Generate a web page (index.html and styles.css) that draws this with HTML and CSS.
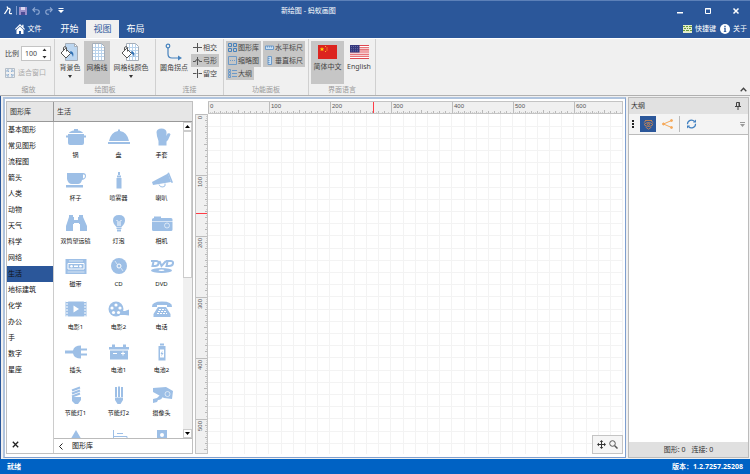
FILE: index.html
```html
<!DOCTYPE html>
<html lang="zh-CN">
<head>
  <meta charset="UTF-8" />
  <meta name="viewport" content="width=device-width, initial-scale=1.0"/>
  <title>新绘图 - 蚂蚁画图</title>
  <link rel="stylesheet" href="styles.css">
</head>
<body>
  <header class="titlebar">
    <div class="quick">
      <svg width="10" height="9" viewBox="0 0 10 9" fill="none" stroke="#fff" stroke-width="1.3"><path d="M4 .5l1 2-3.500 5.500M5 2.500c3-.5 2 2 1.500 3.500s.5 2 2.500 1.500"/></svg>
      <i class="sep"></i>
      <button aria-label="保存"><svg width="8" height="8" viewBox="0 0 8 8"><path fill="#9b8fc9" d="M0 0h8v8H0z"/><path fill="#dcd8f0" d="M2 0h4v3H2z"/><path fill="#4d4c94" d="M2 5h4v3H2z"/></svg></button>
      <button aria-label="撤销"><svg width="8" height="8" viewBox="0 0 8 8" fill="none" stroke="#8ea8d2" stroke-width="1.100"><path d="M3 .5L.8 2.700 3 5M1 2.700h4a2.200 2.200 0 0 1 0 4.500H4"/></svg></button>
      <button aria-label="重做"><svg width="8" height="8" viewBox="0 0 8 8" fill="none" stroke="#8ea8d2" stroke-width="1.100"><path d="M5 .5l2.200 2.200L5 5M7 2.700H3a2.200 2.200 0 0 0 0 4.500h1"/></svg></button>
      <button aria-label="更多"><svg width="6" height="6" viewBox="0 0 6 6" fill="#fff"><path d="M.5 0h5v1h-5zM0 2h6L3 5z"/></svg></button>
    </div>
    <h1>新绘图 - 蚂蚁画图</h1>
    <div class="winbtns">
      <button aria-label="最小化"><svg width="8" height="8" viewBox="0 0 8 8"><path fill="#fff" d="M1 5h6v1.500H1z"/></svg></button>
      <button aria-label="最大化"><svg width="8" height="8" viewBox="0 0 8 8" fill="none" stroke="#fff"><path d="M1.500 1.500h5v5h-5zM1 2h6"/></svg></button>
      <button aria-label="关闭"><svg width="8" height="8" viewBox="0 0 8 8" stroke="#fff" stroke-width="1.500"><path d="M1.500 1.500l5 5M6.500 1.500l-5 5"/></svg></button>
    </div>
  </header>

  <nav class="tabs">
    <button class="tab file"><svg width="10" height="10" viewBox="0 0 10 10" fill="#fff"><path d="M5 0L0 5l.8.8L5 1.700l4.200 4.100.8-.8L8.500 3.500V.8h-1.300v1.400z"/><path d="M5 2.600L1.500 6v4h2.500V7h2v3h2.500V6z"/></svg>文件</button>
    <button class="tab">开始</button>
    <button class="tab active">视图</button>
    <button class="tab">布局</button>
    <div class="tab-right">
      <button><svg width="9" height="8" viewBox="0 0 9 8"><path fill="#e4edc8" d="M0 0h9v8H0z"/><path stroke="#6d9b3a" d="M0 1.500h2m1 0h2m1 0h3M1 3.500h2m1 0h1m1 0h2M0 5.500h2m1 0h3m1 0h2"/></svg>快捷键</button>
      <button><svg width="10" height="10" viewBox="0 0 10 10"><circle cx="5" cy="5" r="5" fill="#fff"/><path fill="#2b579a" d="M4.300 1.700h1.400V3H4.300zM4 3.800h1.700v3.500h.6v.8H3.800v-.8h.6V4.600H4z"/></svg>关于</button>
    </div>
  </nav>

  <section class="ribbon">
    <div class="group g-zoom">
      <div class="tools stack">
        <label class="spin">比例
          <span class="spinbox"><input type="number" value="100"><svg width="5" height="11" viewBox="0 0 5 11" fill="#333"><path d="M.5 3l2-2.500 2 2.500zM.5 8l2 2.500 2-2.500z"/></svg></span>
        </label>
        <button class="row-btn" disabled><svg width="10" height="10" viewBox="0 0 10 10" fill="none" stroke="#8fb0d3"><path stroke="#b5bec8" d="M.5.5h9v9h-9z"/><path d="M2 4V2h2M6 2h2v2M8 6v2H6M4 8H2V6M3 3l1 1M7 3L6 4M7 7L6 6M3 7l1-1"/></svg>适合窗口</button>
      </div>
      <p>缩放</p>
    </div>
    <div class="group g-board">
      <div class="tools">
        <button class="big">
          <svg width="20" height="18" viewBox="0 0 20 18"><path fill="#bcd6f0" stroke="#a6aeb8" d="M5.500.5h9l3 3v14h-12z"/><path fill="#fff" stroke="#a6aeb8" d="M14.500.5v3h3z"/><use href="#bucket"/></svg>
          背景色<i class="drop"></i></button>
        <button class="big on">
          <svg width="20" height="18" viewBox="0 0 20 18"><use href="#gridpage"/></svg>
          网格线</button>
        <button class="big wide">
          <svg width="20" height="18" viewBox="0 0 20 18"><use href="#gridpage"/><use href="#bucket"/></svg>
          网格线颜色<i class="drop"></i></button>
      </div>
      <p>绘图板</p>
    </div>
    <div class="group g-link">
      <div class="tools">
        <button class="big link">
          <svg width="18" height="18" viewBox="0 0 18 18" fill="none" stroke="#4682bd" stroke-width="1.200"><circle cx="3" cy="3" r="1.800"/><path d="M3 5v6q0 4 4 4h7"/><path fill="#4682bd" stroke="none" d="M13 12.500l4 2.500-4 2.500z"/></svg>
          圆角拐点</button>
        <div class="stack tight">
          <button class="row-btn"><svg width="9" height="9" viewBox="0 0 9 9" stroke="#555"><path d="M0 4.500h9M4.500 0v9"/></svg>相交</button>
          <button class="row-btn on"><svg width="9" height="9" viewBox="0 0 9 9" fill="none" stroke="#555"><path d="M0 5.500h2.500a2 2 0 0 1 4 0H9M4.500 1v8"/></svg>弓形</button>
          <button class="row-btn"><svg width="9" height="9" viewBox="0 0 9 9" stroke="#555"><path d="M0 4.500h3.500M5.500 4.500H9M4.500 0v9"/></svg>留空</button>
        </div>
      </div>
      <p>连接</p>
    </div>
    <div class="group g-panel">
      <div class="tools">
        <div class="stack tight">
          <button class="row-btn on"><svg width="9" height="9" viewBox="0 0 9 9" fill="none" stroke="#4682bd"><path d="M.5.5h3v3h-3zM5.500.5h3v3h-3zM.5 5.500h3v3h-3zM5.500 5.500h3v3h-3z"/></svg>图形库</button>
          <button class="row-btn on"><svg width="9" height="9" viewBox="0 0 9 9" fill="none" stroke="#6d9ac8"><path d="M.5.5h8v8h-8z"/><path d="M2 4.500h1m1 0h1m1 0h1"/></svg>缩略图</button>
          <button class="row-btn on"><svg width="9" height="9" viewBox="0 0 9 9" fill="none" stroke="#6d9ac8"><path d="M.5.500h2v2h-2zM.5 3.500h2v2h-2zM.5 6.500h2v2h-2zM4 1.500h5M4 4.500h5M4 7.500h5"/></svg>大纲</button>
        </div>
        <div class="stack tight">
          <button class="row-btn on"><svg width="9" height="9" viewBox="0 0 9 9" fill="#c9dff4" stroke="#6d9ac8"><path d="M.5 3h8v3.500h-8z"/><path d="M2.500 3v1.500m2-1.500v1.500m2-1.500v1.500"/></svg>水平标尺</button>
          <button class="row-btn on"><svg width="9" height="9" viewBox="0 0 9 9" fill="#c9dff4" stroke="#6d9ac8"><path d="M3 .5h3.500v8H3z"/><path d="M3 2.500h1.500M3 4.500h1.500M3 6.500h1.500"/></svg>垂直标尺</button>
        </div>
      </div>
      <p>功能面板</p>
    </div>
    <div class="group g-lang">
      <div class="tools">
        <button class="big flag on">
          <svg width="19" height="14" viewBox="0 0 19 14"><path fill="#dc241f" d="M0 0h19v14H0z"/><path fill="#ffde00" d="M4 2l.6 1.500h1.600L5 4.500l.5 1.600L4 5.200l-1.500.9.500-1.600-1.200-1h1.600z"/><path fill="#ffb52b" d="M7 1h1v1H7zM8.500 2.500h1v1h-1zM8.500 4.500h1v1h-1zM7 6h1v1H7z"/></svg>
          简体中文</button>
        <button class="big flag">
          <svg width="19" height="14" viewBox="0 0 19 14"><path fill="#fff" d="M0 0h19v14H0z"/><path stroke="#e0474f" stroke-width="1.100" d="M0 .5h19M0 2.700h19M0 4.900h19M0 7h19M0 9.200h19M0 11.300h19M0 13.500h19"/><path fill="#35387d" d="M0 0h9.500v7.500H0z"/><path stroke="#8d90bd" stroke-width=".6" stroke-dasharray="1 1" d="M1 1.500h8M1 3.700h8M1 5.900h8"/></svg>
          English</button>
      </div>
      <p>界面语言</p>
    </div>
    <button class="collapse" aria-label="折叠功能区"><svg width="7" height="5" viewBox="0 0 7 5" fill="none" stroke="#444" stroke-width="1.300"><path d="M.7 4.200L3.500 1.200l2.800 3"/></svg></button>
  </section>

  <main class="work">
    <div class="dock">
      <aside class="library">
        <div class="lib-head"><h2>图形库</h2><h2>生活</h2></div>
        <div class="lib-body">
          <div class="cats">
            <ul>
              <li><button>基本图形</button></li>
              <li><button>常见图形</button></li>
              <li><button>流程图</button></li>
              <li><button>箭头</button></li>
              <li><button>人类</button></li>
              <li><button>动物</button></li>
              <li><button>天气</button></li>
              <li><button>科学</button></li>
              <li><button>网络</button></li>
              <li><button class="sel">生活</button></li>
              <li><button>地标建筑</button></li>
              <li><button>化学</button></li>
              <li><button>办公</button></li>
              <li><button>手</button></li>
              <li><button>数字</button></li>
              <li><button>星座</button></li>
            </ul>
            <button class="close" aria-label="关闭图形库"><svg width="7" height="7" viewBox="0 0 7 7" stroke="#222" stroke-width="1.300"><path d="M.8.8l5.400 5.400M6.200.8L.8 6.200"/></svg></button>
          </div>
          <div class="shapes">
            <div class="shape-scroll">
              <div class="shape-grid">
                <button class="shape"><svg viewBox="0 0 24 20"><path d="M5 6q1-2 5-2.500V2h4v1.500q4 .5 5 2.500zM4 7h16v9q0 2-2 2H6q-2 0-2-2zM2 8.500h2v2H2zM20 8.500h2v2h-2z"/></svg>锅</button>
                <button class="shape"><svg viewBox="0 0 24 20"><path d="M2 14Q4 5 11 4V2.500h2V4q7 1 9 10zM1 15h22v2H1z"/></svg>盘</button>
                <button class="shape"><svg viewBox="0 0 24 20"><path d="M6.500 5q.5-3.500 5-3.500t5 3.500v4l1-2.500q2.500-1 3 1L18 13l-1.500 1.500v4h-8V14Q6.500 9 6.500 5z"/></svg>手套</button>
                <button class="shape"><svg viewBox="0 0 24 20"><path fill-rule="evenodd" d="M3 3h16q3 0 3 3t-4 4q-1 4-4 4H8q-4 0-5-5zM19 4.500v4Q21 8 21 6t-2-1.500zM2 15h17v2.500H2z"/></svg>杯子</button>
                <button class="shape"><svg viewBox="0 0 24 20"><path d="M11 2h2v3h-2zM10 5.500h4v2h-4zM9.500 8h5v10.500h-5z"/></svg>喷雾器</button>
                <button class="shape"><svg viewBox="0 0 24 20"><path d="M2 12L18 3.500l3 8.500-18 3z"/><path d="M17.500 3l1.500-.5 4 10-1.500.5z"/><path class="line" d="M9 14.500q1 3 4 2.500t2-3.500"/></svg>喇叭</button>
                <button class="shape"><svg viewBox="0 0 24 20"><path d="M5 2h4v2h1v3h4V4h1V2h4v2l4 9v5h-7v-7h-1v-1h-5v1H9v7H2v-5l3-9z"/></svg>双筒望远镜</button>
                <button class="shape"><svg viewBox="0 0 24 20"><path d="M12 2q6 0 6 5.500 0 3-3.500 6.500h-5Q6 10.500 6 7.500 6 2 12 2zM9.500 14.500h5V16h-5zM10 16.500h4v2h-4z"/><path class="cut" d="M9.500 7l1.500 1.500V13m3.500-6L13 8.500V13"/></svg>灯泡</button>
                <button class="shape"><svg viewBox="0 0 24 20"><path d="M4 3.500h7V5h10q1.500 0 1.500 1.500v10q0 1.500-1.500 1.500H3.500Q2 18 2 16.500v-10Q2 5 4 5z"/><path class="cut thin" d="M2 8.500h21"/><circle cx="17" cy="12.500" r="2.500" class="cut thin"/></svg>相机</button>
                <button class="shape"><svg viewBox="0 0 24 20"><path d="M1.500 3h21v15h-21z"/><path class="cut" d="M4 7.500h16v5.500H4z"/><path class="cut thin" d="M3.500 16h17M5 5h14"/><circle class="hole" cx="7.500" cy="10.200" r="1.300"/><circle class="hole" cx="16.500" cy="10.200" r="1.300"/><path class="hole" d="M10 9.500h4V11h-4z"/></svg>磁带</button>
                <button class="shape"><svg viewBox="0 0 24 20"><circle cx="12" cy="10" r="8"/><circle class="cut" cx="12" cy="10" r="2"/><path class="cut thin" d="M8 5l2 3M14 12l2 3"/></svg>CD</button>
                <button class="shape"><svg viewBox="0 0 24 20"><path class="line bold" d="M1 5h5q3 0 2.500 2.500T5 10H2.500L3.500 6M9.500 5l2 5 4.500-5M16 5h4.500q3 0 2.500 2.500T19 10h-2.500l1-4"/><ellipse cx="11.500" cy="14.500" rx="10.500" ry="2.500"/><ellipse class="hole" cx="11.500" cy="14.300" rx="3" ry=".8"/></svg>DVD</button>
                <button class="shape"><svg viewBox="0 0 24 20"><path d="M1.500 2.500q1.500 1 3 0h15q1.500 1 3 0v15q-1.500-1-3 0h-15q-1.500-1-3 0z"/><path class="cut dash" d="M3 4v13M21 4v13"/><path class="hole" d="M9.500 6.500L15 10l-5.500 3.500z"/></svg>电影1</button>
                <button class="shape"><svg viewBox="0 0 24 20"><circle cx="9" cy="10" r="7.500"/><path d="M12 12h6l4-1.500v6L18 16h-9z"/><circle class="hole" cx="9" cy="6" r="1.600"/><circle class="hole" cx="13" cy="9" r="1.600"/><circle class="hole" cx="5" cy="9" r="1.600"/><circle class="hole" cx="6.500" cy="13.500" r="1.600"/><circle class="hole" cx="11.500" cy="13.500" r="1.600"/></svg>电影2</button>
                <button class="shape"><svg viewBox="0 0 24 20"><path d="M2 8q-.5-5.500 10-5.500T22 8h-5V6H7v2zM8 8h8l4.500 7v3h-17v-3z"/><path class="cut dash" d="M9 10.500h6.500M8 12.500h8.500M7 14.500h10"/></svg>电话</button>
                <button class="shape"><svg viewBox="0 0 24 20"><path d="M1 8.500h8Q10 3.500 17 3.500v3h6v2h-6v3h6v2h-6v3q-7 0-8-5H1z"/></svg>插头</button>
                <button class="shape"><svg viewBox="0 0 24 20"><path d="M2 5h20v2.500H2zM3 8.500h18v9H3zM5 2.500h3V5H5zM16 2.500h3V5h-3z"/><path class="cut" d="M6 11.500h4M14 11.500h4M16 9.500v4"/></svg>电池1</button>
                <button class="shape"><svg viewBox="0 0 24 20"><path d="M10 1.500h4v2h-4zM8.500 4h7v14.500h-7z"/><path class="hole" d="M10 7.500h4v8h-4z"/><path d="M12.500 8.500l-2 3.500h1.200l-.5 2.500 2.300-3.500h-1.300z"/></svg>电池2</button>
                <button class="shape"><svg viewBox="0 0 24 20"><path class="line bold" d="M8 5.500l8-3M8 8.500l8-3M8 11.500l8-3"/><path d="M8 12h9v3l-3 4h-3l-3-3z"/></svg>节能灯1</button>
                <button class="shape"><svg viewBox="0 0 24 20"><path class="line bold" d="M9 2v10M12 1.500V12M15 2v10"/><path d="M8 12.500h8V15l-2.500 4h-3L8 15z"/></svg>节能灯2</button>
                <button class="shape"><svg viewBox="0 0 24 20"><path d="M3 3l13-1 7 4-1 8-8-1-11-6z"/><path d="M10 10l3 1q-1 4-5 4l-1 2-4 1v-4l4-1z"/><circle class="cut thin" cx="17.500" cy="9" r="2.500"/></svg>摄像头</button>
                <button class="shape" aria-label="圆锥"><svg viewBox="0 0 24 20"><path d="M12 2l7 12H5z"/></svg></button>
                <button class="shape" aria-label="床"><svg viewBox="0 0 24 20"><path class="line" d="M6.500 2v12M6 8.500h14v6M10 5.500h6"/></svg></button>
                <button class="shape" aria-label="音箱"><svg viewBox="0 0 24 20"><path d="M7 2h10v14H7z"/><circle class="hole" cx="12" cy="7" r="2"/></svg></button>
              </div>
              <div class="vscroll">
                <button aria-label="向上"><svg width="5" height="3" viewBox="0 0 5 3"><path d="M0 3l2.500-3L5 3z"/></svg></button>
                <div class="thumb"></div>
                <button class="down" aria-label="向下"><svg width="5" height="3" viewBox="0 0 5 3"><path d="M0 0l2.500 3L5 0z"/></svg></button>
              </div>
            </div>
            <button class="back"><svg width="4" height="7" viewBox="0 0 4 7" fill="none" stroke="#222"><path d="M3.500.5l-3 3 3 3"/></svg>图形库</button>
          </div>
        </div>
      </aside>

      <section class="board">
        <svg class="ruler-h">
          <defs>
            <pattern id="hticks" width="61" height="13" patternUnits="userSpaceOnUse">
              <path stroke="#cfcfcf" d="M2.500 10v2m2-2v2m4-2v2m2-2v2m4-2v2m2-2v2m4-2v2m2-2v2m4-2v2m2-2v2m6-2v2m2-2v2m4-2v2m2-2v2m4-2v2m2-2v2m4-2v2m2-2v2m4-2v2"/>
              <path stroke="#b8b8b8" d="M6.500 9v3m6-3v3m6-3v3m6-3v3m12-3v3m6-3v3m6-3v3m6-3v3M30.500 8v4"/>
              <path stroke="#bdbdbd" d="M.5 0v13"/>
            </pattern>
          </defs>
          <rect width="100%" height="100%" fill="url(#hticks)"/>
          <rect x="165" width="1" height="12" fill="#ff3c46"/>
          <text x="2" y="6">0</text><text x="63" y="6">100</text><text x="124" y="6">200</text><text x="185" y="6">300</text><text x="246" y="6">400</text><text x="307" y="6">500</text><text x="368" y="6">600</text>
        </svg>
        <svg class="ruler-v">
          <defs>
            <pattern id="vticks" width="13" height="61" patternUnits="userSpaceOnUse">
              <path stroke="#cfcfcf" d="M10 2.500h2m-2 2h2m-2 4h2m-2 2h2m-2 4h2m-2 2h2m-2 4h2m-2 2h2m-2 4h2m-2 2h2m-2 6h2m-2 2h2m-2 4h2m-2 2h2m-2 4h2m-2 2h2m-2 4h2m-2 2h2m-2 4h2"/>
              <path stroke="#b8b8b8" d="M9 6.500h3m-3 6h3m-3 6h3m-3 6h3m-3 12h3m-3 6h3m-3 6h3m-3 6h3M8 30.500h4"/>
              <path stroke="#bdbdbd" d="M0 .5h13"/>
            </pattern>
          </defs>
          <rect width="100%" height="100%" fill="url(#vticks)"/>
          <rect y="99" width="12" height="1" fill="#ff3c46"/>
          <g text-anchor="end">
            <text transform="translate(6 2) rotate(-90)">0</text><text transform="translate(6 63) rotate(-90)">100</text><text transform="translate(6 124) rotate(-90)">200</text><text transform="translate(6 185) rotate(-90)">300</text><text transform="translate(6 246) rotate(-90)">400</text><text transform="translate(6 307) rotate(-90)">500</text>
          </g>
        </svg>
        <svg class="paper">
          <defs>
            <pattern id="grid" width="61" height="61" patternUnits="userSpaceOnUse">
              <path stroke="#f3f3f3" fill="none" d="M12.500 0v61m12-61v61m12-61v61m12-61v61m12-61v61M0 12.500h61M0 24.500h61M0 36.500h61M0 48.500h61M0 60.500h61"/>
            </pattern>
          </defs>
          <rect width="100%" height="100%" fill="url(#grid)"/>
        </svg>
        <div class="view-tools">
          <button aria-label="平移"><svg width="9" height="9" viewBox="0 0 9 9" fill="#333"><path d="M4 1h1v7H4zM1 4h7v1H1zM4.500 0l1.700 2H2.800zM4.500 9L2.800 7h3.400zM0 4.500l2-1.700v3.400zM9 4.500L7 6.200V2.800z"/></svg></button>
          <button aria-label="缩放"><svg width="9" height="9" viewBox="0 0 9 9" fill="none" stroke="#555"><circle cx="3.500" cy="3.500" r="2.800"/><path stroke-width="1.500" d="M5.700 5.700l2.800 2.800"/></svg></button>
        </div>
      </section>
    </div>

    <aside class="outline">
      <div class="out-head"><h2>大纲</h2>
        <button aria-label="固定"><svg width="6" height="8" viewBox="0 0 6 8" fill="none" stroke="#444"><path d="M1.500.5h3v4h-3zM4 .5v4M0 4.500h6M3 5v3"/></svg></button>
      </div>
      <div class="out-tools">
        <svg width="2" height="8" viewBox="0 0 2 8" fill="#222"><path d="M0 0h2v2H0zM0 3h2v2H0zM0 6h2v2H0z"/></svg>
        <button class="pick" aria-label="缩略视图"><svg width="11" height="11" viewBox="0 0 11 11" fill="none" stroke="#d98b4a" stroke-width=".8"><path d="M2 1.500h7M.8 3.500l2-1.500M10.200 3.500L8.200 2M1 5.500q4.500-4 9 0-4.500 4-9 0z"/><circle cx="5.500" cy="5.300" r="1"/><path d="M2.500 8l3 2.300L8.500 8"/></svg></button>
        <button aria-label="树形视图"><svg width="11" height="10" viewBox="0 0 11 10" fill="#f5a95a" stroke="#f5a95a"><path fill="none" d="M9.500 1.500L1.500 5l8 3.500"/><circle cx="1.500" cy="5" r="1"/><circle cx="9.500" cy="1.500" r="1"/><circle cx="9.500" cy="8.500" r="1"/></svg></button>
        <i class="sep"></i>
        <button aria-label="刷新"><svg width="11" height="10" viewBox="0 0 11 10" fill="none" stroke="#3f7fc0" stroke-width="1.200"><path d="M1.500 5.200A4 4 0 0 1 8.500 2.500M9.500 4.800A4 4 0 0 1 2.500 7.500"/><path fill="#3f7fc0" stroke="none" d="M7 3.500h3V.5zM4 6.500H1v3z"/></svg></button>
        <button class="more" aria-label="更多"><svg width="5" height="5" viewBox="0 0 5 5" fill="#999"><path d="M0 0h5v1H0zM0 2h5L2.500 5z"/></svg></button>
      </div>
      <div class="out-body"></div>
      <div class="out-foot"><span>图形: 0</span><span>连接: 0</span></div>
    </aside>
  </main>

  <footer class="status"><span>就绪</span><span>版本：1.2.7257.25208</span></footer>

  <svg width="0" height="0" class="defs">
    <defs>
      <g id="gridpage"><path fill="#fff" stroke="#a6aeb8" d="M5.500.5h9l3 3v14h-12z"/><path stroke="#b9d3ec" d="M8.500 1v16M11.500 1v16M14.500 1v16M6 4.500h11M6 7.500h11M6 10.500h11M6 13.500h11"/></g>
      <g id="bucket"><path fill="#fff" stroke="#555" d="M5.500 5.500l5 5-4.500 4.500-5-5z"/><path fill="none" stroke="#555" d="M3.500 7.500V4.500q1.500-2 3 0v4"/><path fill="#2f6fb3" d="M10.500 8q4 1 2.500 6-.5-3-3-4z"/></g>
    </defs>
  </svg>
</body>
</html>
```
FILE: styles.css
```css
* {
  box-sizing: border-box;
}
body {
  margin: 0;
  height: 100vh;
  display: flex;
  flex-direction: column;
  overflow: hidden;
  font-family: "Noto Sans", "Noto Sans CJK SC", sans-serif;
  font-size: 7px;
  line-height: 10px;
  color: #333;
  background: #f0f0f0;
}
h1, h2, p, ul {
  margin: 0;
  padding: 0;
  font-size: 7px;
  font-weight: normal;
}
ul { list-style: none; }
svg { flex: none; }
button {
  display: flex;
  align-items: center;
  justify-content: center;
  border: 0;
  padding: 0;
  background: none;
  font: inherit;
  color: inherit;
  white-space: nowrap;
}
.defs { position: absolute; }

/* title bar */
.titlebar {
  display: grid;
  grid-template-columns: 11fr auto 16fr;
  align-items: center;
  height: 20px;
  padding: 0 10px 0 3px;
  border-top: 1px solid #5c80b8;
  background: #2b579a;
  color: #fff;
}
.quick {
  display: flex;
  align-items: center;
  gap: 5px;
}
.quick .sep {
  width: 1px;
  height: 9px;
  margin: 0 -3px 0 -2px;
  background: #7d9aca;
}
.winbtns {
  display: flex;
  justify-content: flex-end;
  gap: 20px;
}

/* tabs */
.tabs {
  display: flex;
  height: 18px;
  padding: 0 3px 0 8px;
  background: #2b579a;
  color: #fff;
}
.tab {
  width: 33px;
  font-size: 9px;
}
.file {
  width: 40px;
  margin-right: 5px;
  gap: 3px;
  font-size: 7px;
}
.tab.active {
  background: #f0f0f0;
  color: #2b579a;
}
.tab-right {
  display: flex;
  gap: 4px;
  margin-left: auto;
}
.tab-right button { gap: 3px; }

/* ribbon */
.ribbon {
  display: flex;
  height: 58px;
  border-top: 1px solid #fff;
  border-bottom: 1px solid #b0b0b0;
  color: #444;
}
.group {
  display: flex;
  flex-direction: column;
  padding: 2px 2px 0;
  border-right: 1px solid #d0d0d0;
}
.group p {
  margin-top: auto;
  color: #999;
  text-align: center;
}
.g-zoom { width: 55px; padding-left: 5px; }
.g-board { width: 101px; }
.g-link { width: 68px; }
.g-panel { width: 85px; }
.g-lang { width: 67px; }
.tools {
  display: flex;
  gap: 1px;
  height: 43px;
}
.stack {
  display: flex;
  flex-direction: column;
  align-items: flex-start;
  gap: 5px;
}
.tight { gap: 0; }
.g-zoom .stack { padding-top: 5px; }
.g-panel .tools { gap: 2px; }
.spin {
  display: flex;
  align-items: center;
  gap: 2px;
}
.spinbox {
  display: flex;
  align-items: center;
  justify-content: space-between;
  width: 30px;
  height: 15px;
  padding: 0 3px;
  border: 1px solid #c4c4c4;
  background: #fff;
}
.spinbox input {
  width: 16px;
  border: 0;
  padding: 0;
  font: inherit;
  color: inherit;
  background: none;
  appearance: textfield;
}
.spinbox input::-webkit-inner-spin-button { display: none; }
.row-btn {
  height: 13px;
  padding: 0 2px;
  gap: 1px;
}
.row-btn:disabled { padding: 0; gap: 3px; color: #aaa; }
.big {
  flex-direction: column;
  justify-content: flex-start;
  width: 26px;
  padding-top: 2px;
  gap: 2px;
}
.big.wide { width: 40px; }
.big.link { width: 32px; }
.big.flag { width: 33px; padding-top: 4px; gap: 3px; }
.big.flag + .flag { width: 28px; }
.on { background: #c6c6c6; }
.drop {
  border: 2px solid transparent;
  border-top: 3px solid #333;
  border-bottom: 0;
}
.collapse {
  align-self: flex-end;
  margin: 0 3px 3px auto;
}

/* work area */
.work {
  flex: 1;
  display: flex;
  gap: 2px;
  min-height: 0;
  padding: 1px 1px 1px 2px;
  border-left: 1px solid #2b579a;
}
.dock {
  flex: 1;
  display: flex;
  gap: 2px;
  min-width: 0;
  padding: 2px 2px 3px 1px;
  border: 1px solid #7f9fcf;
  border-top: 2px solid #b0c4de;
  border-left: 2px solid #b0c4de;
  background: #fff;
}
.library {
  display: flex;
  flex-direction: column;
  width: 187px;
  border: 1px solid #c0c0c0;
}
.lib-head {
  display: grid;
  grid-template-columns: 46px 1fr;
  height: 20px;
  border-bottom: 1px solid #999;
  background: #e6e6e6;
}
.lib-head h2 {
  padding: 5px 3px;
}
.lib-head h2 + h2 { border-left: 1px solid #999; }
.lib-body {
  flex: 1;
  display: grid;
  grid-template-columns: 46px 1fr;
  min-height: 0;
}
.cats {
  display: flex;
  flex-direction: column;
  justify-content: space-between;
  align-items: flex-start;
  color: #111;
}
.cats ul { width: 100%; }
.cats li button {
  justify-content: flex-start;
  width: 100%;
  height: 16px;
  padding-left: 1px;
}
.cats .sel {
  background: #2b579a;
}
.close { margin: 5px; }
.shapes {
  display: flex;
  flex-direction: column;
  min-height: 0;
  border-left: 1px solid #ccc;
}
.shape-scroll {
  flex: 1;
  display: flex;
  min-height: 0;
}
.shape-grid {
  flex: 1;
  display: grid;
  grid-template-columns: repeat(3, 1fr);
  grid-auto-rows: 43px;
  overflow: hidden;
}
.shape {
  flex-direction: column;
  justify-content: flex-start;
  padding-top: 5px;
  gap: 3px;
  font-size: 6px;
  color: #111;
}
.shape svg {
  width: 24px;
  height: 20px;
  fill: #9dbfe6;
}
.shape .line { fill: none; stroke: #9dbfe6; }
.shape .bold { stroke-width: 2; }
.shape .cut { fill: none; stroke: #fff; }
.shape .thin { stroke-width: .6; }
.shape .dash { stroke-dasharray: 2 1; }
.shape .hole { fill: #fff; }
.vscroll {
  display: flex;
  flex-direction: column;
  width: 9px;
  background: #f0f0f0;
}
.vscroll button {
  height: 9px;
  border: 1px solid #ccc;
  background: #fff;
}
.vscroll .thumb {
  height: 147px;
  border: 1px solid #ccc;
  background: #fff;
}
.vscroll .down { margin-top: auto; }
.back {
  justify-content: flex-start;
  height: 15px;
  padding-left: 5px;
  gap: 9px;
  border-top: 1px solid #bbb;
  color: #111;
}

/* drawing board */
.board {
  position: relative;
  flex: 1;
  display: grid;
  grid-template: 13px 1fr / 13px 1fr;
  min-width: 0;
}
.board text {
  font-family: "Liberation Sans", sans-serif;
  font-size: 6px;
  fill: #555;
}
.ruler-h, .ruler-v {
  width: 100%;
  height: 100%;
  background: #f0f0f0;
}
.ruler-h { grid-column: 2; }
.ruler-v, .paper { grid-row: 2; }
.ruler-h { border: 1px solid #c4c4c4; border-left: 0; }
.ruler-v { border: 1px solid #c4c4c4; border-top: 0; }
.paper {
  width: 100%;
  height: 100%;
}
.view-tools {
  position: absolute;
  right: 0;
  bottom: 0;
  display: flex;
  gap: 3px;
  padding: 4px;
  border: 1px solid #c4c4c4;
  background: #f5f5f5;
}

/* outline panel */
.outline {
  display: flex;
  flex-direction: column;
  width: 121px;
  border: 1px solid #bbb;
  background: #fff;
}
.out-head {
  display: flex;
  justify-content: space-between;
  height: 16px;
  padding: 0 7px 0 2px;
  align-items: center;
  background: #e1e1e1;
}
.out-tools {
  display: flex;
  align-items: center;
  gap: 6px;
  height: 21px;
  padding: 0 3px;
  border-bottom: 1px solid #bbb;
  background: #f4f4f4;
}
.out-tools .sep {
  width: 1px;
  height: 16px;
  background: #bbb;
}
.pick {
  width: 16px;
  height: 16px;
  background: #2b579a;
}
.more { margin-left: auto; }
.out-body { flex: 1; }
.out-foot {
  display: flex;
  justify-content: center;
  align-items: center;
  gap: 6px;
  height: 15px;
  background: #e0e0e0;
}

.status {
  display: flex;
  justify-content: space-between;
  align-items: center;
  height: 15px;
  padding: 0 7px;
  background: #0062c4;
  color: #fff;
  font-weight: bold;
}
```
